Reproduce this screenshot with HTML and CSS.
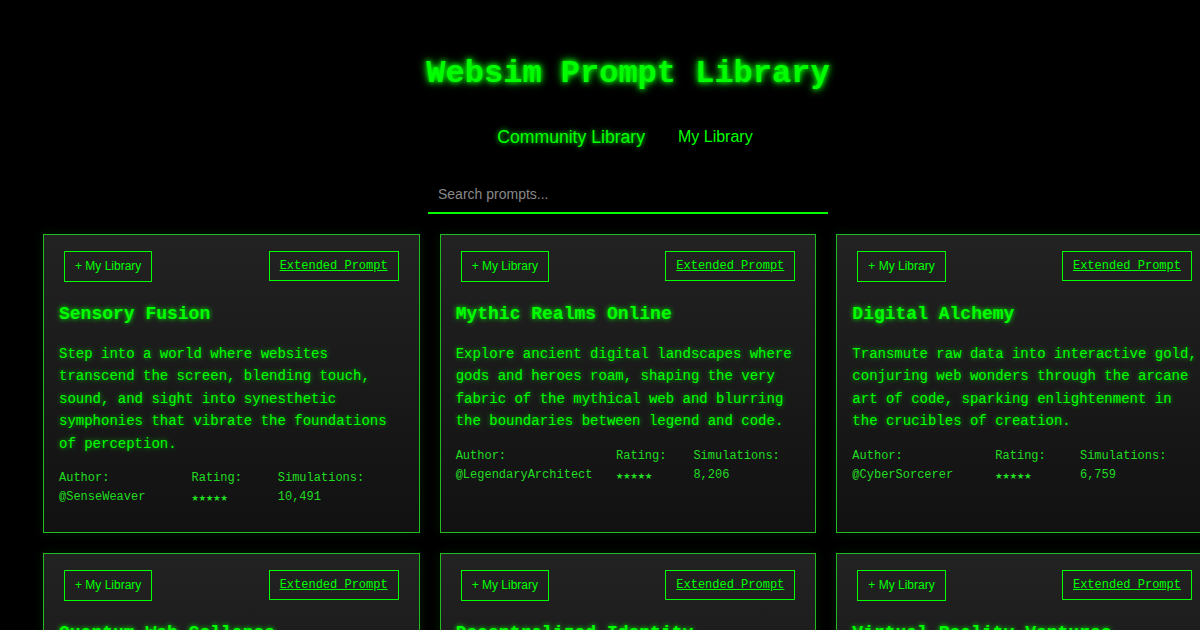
FILE: index.html
```html
<!DOCTYPE html>
<html lang="en">
<head>
  <meta charset="UTF-8" />
  <meta name="viewport" content="width=device-width, initial-scale=1.0"/>
  <title>Websim Prompt Library</title>
  <link rel="stylesheet" href="styles.css">
</head>
<body>

  <div class="container">
    <h1>Websim Prompt Library</h1>

    <div class="tabs">
      <button class="tab active">Community Library</button>
      <button class="tab">My Library</button>
    </div>

    <div class="search">
      <input type="text" placeholder="Search prompts..." />
    </div>

    <div class="grid">
      <div class="card">
        <div class="card-actions">
          <button class="add-btn">+ My Library</button>
          <button class="ext-btn">Extended Prompt</button>
        </div>
        <h3>Sensory Fusion</h3>
        <p class="desc">Step into a world where websites transcend the screen, blending touch, sound, and sight into synesthetic symphonies that vibrate the foundations of perception.</p>
        <div class="meta">
          <span>Author: @SenseWeaver</span>
          <span>Rating: <span class="stars">★★★★★</span></span>
          <span>Simulations: 10,491</span>
        </div>
      </div>

      <div class="card">
        <div class="card-actions">
          <button class="add-btn">+ My Library</button>
          <button class="ext-btn">Extended Prompt</button>
        </div>
        <h3>Mythic Realms Online</h3>
        <p class="desc">Explore ancient digital landscapes where gods and heroes roam, shaping the very fabric of the mythical web and blurring the boundaries between legend and code.</p>
        <div class="meta">
          <span>Author: @LegendaryArchitect</span>
          <span>Rating: <span class="stars">★★★★★</span></span>
          <span>Simulations: 8,206</span>
        </div>
      </div>

      <div class="card">
        <div class="card-actions">
          <button class="add-btn">+ My Library</button>
          <button class="ext-btn">Extended Prompt</button>
        </div>
        <h3>Digital Alchemy</h3>
        <p class="desc">Transmute raw data into interactive gold, conjuring web wonders through the arcane art of code, sparking enlightenment in the crucibles of creation.</p>
        <div class="meta">
          <span>Author: @CyberSorcerer</span>
          <span>Rating: <span class="stars">★★★★★</span></span>
          <span>Simulations: 6,759</span>
        </div>
      </div>

      <div class="card">
        <div class="card-actions">
          <button class="add-btn">+ My Library</button>
          <button class="ext-btn">Extended Prompt</button>
        </div>
        <h3>Quantum Web Collapse</h3>
        <p class="desc">Witness websites that exist in every state at once, collapsing into a single reality only when observed by a curious visitor.</p>
        <div class="meta">
          <span>Author: @QuantumDreamer</span>
          <span>Rating: <span class="stars">★★★★★</span></span>
          <span>Simulations: 5,312</span>
        </div>
      </div>

      <div class="card">
        <div class="card-actions">
          <button class="add-btn">+ My Library</button>
          <button class="ext-btn">Extended Prompt</button>
        </div>
        <h3>Decentralized Identity</h3>
        <p class="desc">Forge a self-sovereign persona across the web, where every visitor owns their story and no server holds the keys.</p>
        <div class="meta">
          <span>Author: @ChainWeaver</span>
          <span>Rating: <span class="stars">★★★★★</span></span>
          <span>Simulations: 4,870</span>
        </div>
      </div>

      <div class="card">
        <div class="card-actions">
          <button class="add-btn">+ My Library</button>
          <button class="ext-btn">Extended Prompt</button>
        </div>
        <h3>Virtual Reality Ventures</h3>
        <p class="desc">Step through the browser into immersive worlds, where pages become places and every link is a doorway.</p>
        <div class="meta">
          <span>Author: @RealityHacker</span>
          <span>Rating: <span class="stars">★★★★★</span></span>
          <span>Simulations: 4,105</span>
        </div>
      </div>
    </div>
  </div>

</body>
</html>
```

FILE: styles.css
```css
* {
  margin: 0; padding: 0; box-sizing: border-box;
}
body {
  background: #000;
  color: #0f0;
  font-family: 'Liberation Mono', 'Courier New', monospace;
  line-height: 1.6;
  overflow: hidden;
}
.container {
  width: 1256px;
  padding: 0 43px;
}
h1 {
  text-align: center;
  font-size: 32px;
  font-weight: bold;
  line-height: 37px;
  padding-top: 55px;
  color: #0f0;
  text-shadow: 0 0 5px #0f0, 0 0 10px #0f0;
}
.tabs {
  display: flex;
  justify-content: center;
  align-items: center;
  gap: 33px;
  margin-top: 32px;
  padding-right: 6px;
  height: 26px;
}
.tab {
  background: none;
  border: none;
  color: #0f0;
  font-family: 'Liberation Sans', Arial, sans-serif;
  font-size: 16px;
  cursor: pointer;
}
.tab.active {
  font-size: 17.6px;
  text-shadow: 0 0 5px #0f0;
}
.search {
  display: flex;
  justify-content: center;
  margin-top: 26px;
}
.search input {
  width: 400px;
  padding: 10px;
  background: #000;
  border: none;
  border-bottom: 2px solid #0f0;
  color: #0f0;
  font-family: 'Liberation Sans', Arial, sans-serif;
  font-size: 14px;
  line-height: 16px;
  outline: none;
}
.search input::placeholder {
  color: #888;
}
.grid {
  display: grid;
  grid-template-columns: repeat(3, 1fr);
  gap: 20px;
  margin-top: 20px;
}
.card {
  background: linear-gradient(to bottom, #222, #111);
  border: 1px solid #2b2;
  padding: 16px 15px 24px;
  box-shadow: 0 0 10px rgba(0,255,0,0.1);
}
.card-actions {
  display: flex;
  justify-content: space-between;
  align-items: flex-start;
  padding: 0 5px;
}
.add-btn {
  background: none;
  border: 1px solid #0f0;
  color: #0f0;
  font-family: 'Liberation Sans', Arial, sans-serif;
  font-size: 12px;
  line-height: 15px;
  padding: 7px 10px;
  cursor: pointer;
}
.ext-btn {
  background: none;
  border: 1px solid #0f0;
  color: #0f0;
  font-family: 'Liberation Mono', 'Courier New', monospace;
  font-size: 12px;
  line-height: 14px;
  padding: 7px 10px;
  text-decoration: underline;
  cursor: pointer;
}
.card h3 {
  font-size: 18px;
  line-height: 28px;
  margin-top: 18px;
  color: #0f0;
  text-shadow: 0 0 5px #0f0;
}
.desc {
  font-size: 14px;
  line-height: 1.6;
  margin: 15px 0 14px;
  text-shadow: 0 0 5px rgba(0,255,0,0.7);
}
.meta {
  display: flex;
  font-size: 12px;
  line-height: 1.6;
  color: #2d2;
}
.stars {
  font-family: 'DejaVu Sans Mono', monospace;
  font-size: 12px;
}
```
